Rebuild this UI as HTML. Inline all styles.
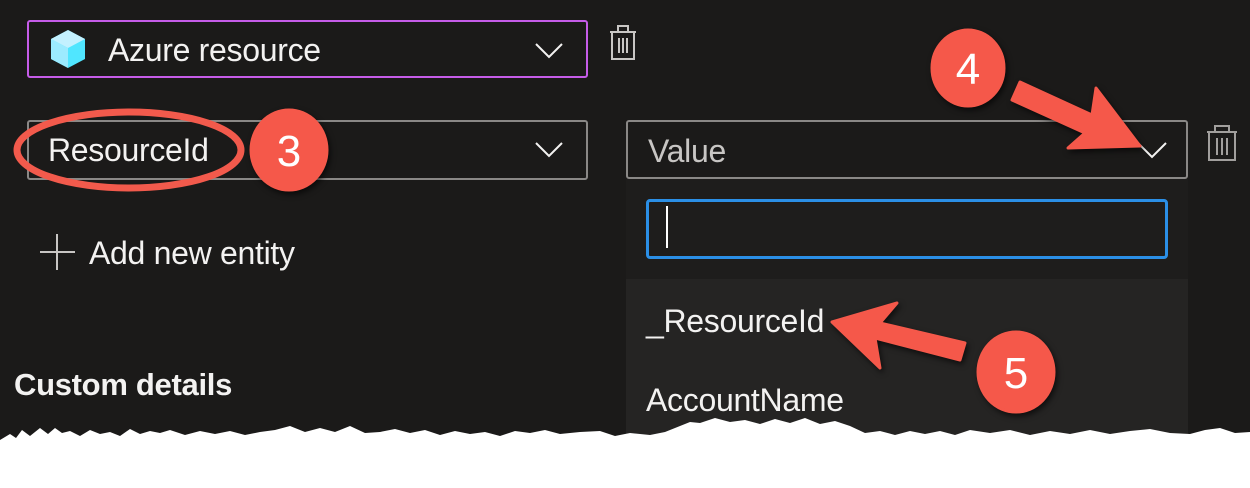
<!DOCTYPE html>
<html><head><style>
body{margin:0;width:1250px;height:488px;overflow:hidden;background:#fff;font-family:"Liberation Sans",sans-serif;position:relative}
.bg{position:absolute;left:0;top:0;width:1250px;height:440px;background:#1b1a19}
.box{position:absolute;border-radius:3px;box-sizing:border-box}
.t{position:absolute;color:#f3f2f1;font-size:32px;white-space:nowrap;letter-spacing:-0.3px}
</style></head><body>
<div class="bg"></div>
<div style="position:absolute;left:626px;top:179px;width:562px;height:100px;background:#1e1d1c"></div>
<div style="position:absolute;left:626px;top:279px;width:562px;height:170px;background:#252423"></div>
<div class="box" style="left:27px;top:20px;width:561px;height:58px;border:2px solid #c55ce8"></div>
<div class="box" style="left:27px;top:120px;width:561px;height:60px;border:2px solid #8a8886"></div>
<div class="box" style="left:626px;top:120px;width:562px;height:59px;border:2px solid #8a8886"></div>
<div class="box" style="left:646px;top:199px;width:522px;height:60px;border:3px solid #2b8fe6;border-radius:4px"></div>
<div style="position:absolute;left:666px;top:206px;width:2px;height:42px;background:#fff"></div>
<div class="t" style="left:108px;top:32px">Azure resource</div>
<div class="t" style="left:48px;top:132px">ResourceId</div>
<div class="t" style="left:648px;top:133px;color:#c8c6c4">Value</div>
<div class="t" style="left:89px;top:235px">Add new entity</div>
<div class="t" style="left:14px;top:367px;font-weight:bold;font-size:31px">Custom details</div>
<div class="t" style="left:646px;top:303px">_ResourceId</div>
<div class="t" style="left:646px;top:382px">AccountName</div>
<svg width="1250" height="488" style="position:absolute;left:0;top:0">
<g fill="none" stroke="#f3f2f1" stroke-width="2">
<path d="M536 44 L549 57 L562 44"/><path d="M536 143 L549 156 L562 143"/><path d="M1138 143 L1152 157 L1166 143"/>
<path d="M40 252 H75 M57 234 V270" stroke="#c8c6c4"/>
</g>
<g fill="none" stroke="#c8c6c4" stroke-width="2">
<path d="M610 32 H636 M618 32 V26 H628 V32 M612 32 V59 H634 V32 M619 38 V53 M623 38 V53 M627 38 V53"/>
<path d="M1207 132 H1237 M1215 132 V126 H1229 V132 M1209 132 V160 H1235 V132 M1217 138 V155 M1222 138 V155 M1227 138 V155" stroke="#a19f9d"/>
</g>
<path d="M68 30 L85 39 V59 L68 68 L51 59 V39 Z" fill="#50e6ff"/>
<path d="M68 30 L85 39 L68 48 L51 39 Z" fill="#c3f1ff"/><path d="M68 48 V68 L51 59 V39 Z" fill="#9cebff"/>
<ellipse cx="129" cy="150" rx="112" ry="38" fill="none" stroke="#f25a4c" stroke-width="7"/>
<g fill="#f5584a" stroke="#f5584a" stroke-linejoin="round" stroke-width="3" style="filter:drop-shadow(2px 3px 3px rgba(0,0,0,.6))">
<ellipse cx="289" cy="150" rx="38" ry="40"/>
<ellipse cx="968" cy="68" rx="36" ry="38"/>
<ellipse cx="1016" cy="372" rx="38" ry="40"/>
<polygon points="1020,82 1092,115 1096,88 1140,146 1068,148 1085,133 1012,100"/>
<polygon points="832,322 897,303 880,323 965,343 960,360 875,338 880,368"/>
</g>
<g fill="#fff" font-family="Liberation Sans,sans-serif" font-size="44" text-anchor="middle">
<text x="289" y="166">3</text><text x="968" y="84">4</text><text x="1016" y="388">5</text>
</g>
<path d="M0 440 L10 434 L16 438 L22 430 L30 436 L40 428 L48 434 L55 428 L62 433 L70 431 L80 436 L90 430 L100 434 L110 432 L120 436 L130 429 L140 434 L150 431 L160 433 L170 430 L185 435 L200 431 L215 434 L230 431 L245 435 L260 432 L275 430 L290 426 L305 432 L320 428 L335 432 L350 426 L365 433 L380 432 L395 429 L410 433 L425 430 L440 435 L455 431 L470 434 L485 432 L500 436 L515 431 L530 433 L545 430 L560 434 L580 432 L600 431 L615 436 L630 433 L650 435 L665 432 L680 426 L690 422 L700 423 L715 418 L730 422 L745 420 L760 424 L775 419 L790 423 L805 418 L820 424 L835 421 L850 426 L865 433 L880 431 L895 435 L910 431 L925 434 L940 431 L955 435 L970 430 L990 433 L1010 430 L1030 435 L1050 431 L1070 434 L1090 430 L1110 434 L1130 431 L1150 429 L1170 433 L1190 434 L1205 430 L1220 428 L1235 433 L1250 432 V488 H0 Z" fill="#fff"/>
</svg>
</body></html>
